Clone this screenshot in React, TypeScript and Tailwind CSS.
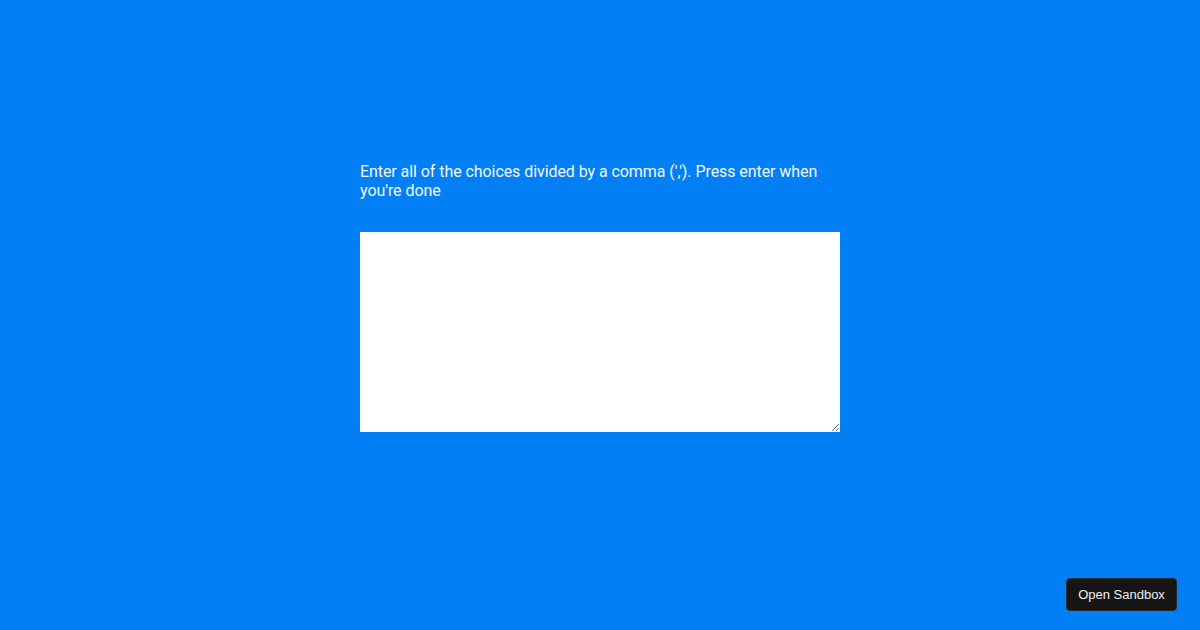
import React from "react";

export default function App() {
  return (
    <div className="w-[1200px] h-[630px] bg-[#027ff5] relative overflow-hidden" style={{ fontFamily: "Roboto, 'Liberation Sans', sans-serif" }}>
      <div className="w-[480px] mx-auto pt-[162px]">
        <p className="text-[16px] leading-[19px] tracking-[-0.07px] text-[#f4f6fa]">
          Enter all of the choices divided by a comma (','). Press enter when you're done
        </p>
        <textarea className="block mt-[32px] w-[480px] h-[200px] bg-white border-0 outline-none" />
      </div>
      <button className="absolute right-[23px] bottom-[19px] w-[111px] h-[33px] rounded-[4px] bg-[#151515] border border-[#2a2a2a] text-[13px] text-[#f0f0f0] flex items-center justify-center" style={{ fontFamily: "'Liberation Sans', Arial, sans-serif" }}>
        Open Sandbox
      </button>
    </div>
  );
}
